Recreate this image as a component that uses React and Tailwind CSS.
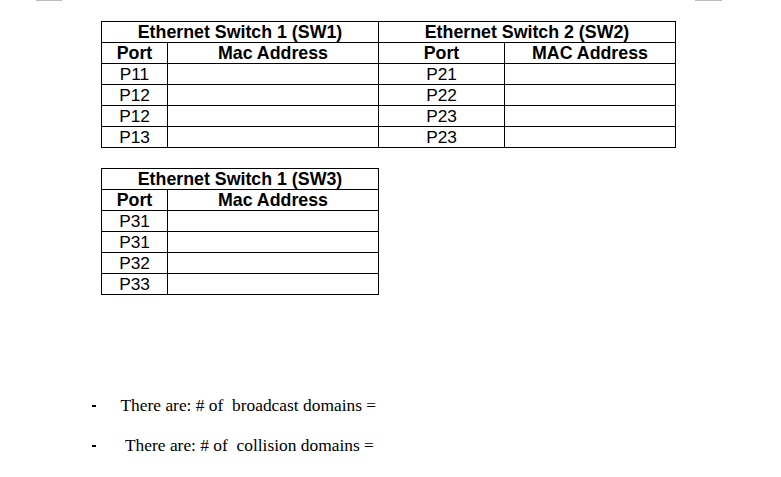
import React from "react";

const sans = { fontFamily: '"Liberation Sans", Arial, sans-serif' };

function Cell({ children, bold, span2 }) {
  return (
    <div
      className={`border-r border-b border-black h-[21px] flex items-center justify-center leading-[20px] text-black ${bold ? "font-bold text-[17.8px]" : "text-[17.3px]"} ${span2 ? "col-span-2" : ""}`}
    >
      {children}
    </div>
  );
}

export default function App() {
  const sw1 = ["P11", "P12", "P12", "P13"];
  const sw2 = ["P21", "P22", "P23", "P23"];
  const sw3 = ["P31", "P31", "P32", "P33"];
  return (
    <div className="w-[781px] h-[477px] bg-white relative overflow-hidden" style={sans}>
      <div className="flex h-px">
        <div className="ml-[36px] w-[26px] h-px bg-[#bdbdbd]" />
        <div className="ml-[633px] w-[27px] h-px bg-[#bdbdbd]" />
      </div>
      <div className="pl-[101px] pt-[20px]">
        <div className="grid grid-cols-[66px_211px_126px_171px] w-[575px] border-l border-t border-black">
          <Cell bold span2>Ethernet Switch 1 (SW1)</Cell>
          <Cell bold span2>Ethernet Switch 2 (SW2)</Cell>
          <Cell bold>Port</Cell>
          <Cell bold>Mac Address</Cell>
          <Cell bold>Port</Cell>
          <Cell bold>MAC Address</Cell>
          {sw1.map((p, i) => (
            <React.Fragment key={i}>
              <Cell>{p}</Cell>
              <Cell></Cell>
              <Cell>{sw2[i]}</Cell>
              <Cell></Cell>
            </React.Fragment>
          ))}
        </div>
        <div className="mt-[20px] grid grid-cols-[66px_211px] w-[278px] border-l border-t border-black">
          <Cell bold span2>Ethernet Switch 1 (SW3)</Cell>
          <Cell bold>Port</Cell>
          <Cell bold>Mac Address</Cell>
          {sw3.map((p, i) => (
            <React.Fragment key={i}>
              <Cell>{p}</Cell>
              <Cell></Cell>
            </React.Fragment>
          ))}
        </div>
      </div>
      <div
        className="pl-[92px] pt-[100px] flex flex-col gap-[19px] text-[17.4px] leading-[21px] text-black"
        style={{ fontFamily: '"Liberation Serif", "Times New Roman", serif' }}
      >
        <div className="flex items-center">
          <div className="w-[4px] h-[2px] bg-black" />
          <span className="ml-[24.5px] whitespace-pre">There are: # of  broadcast domains =</span>
        </div>
        <div className="flex items-center">
          <div className="w-[4px] h-[2px] bg-black" />
          <span className="ml-[29px] whitespace-pre">There are: # of  collision domains =</span>
        </div>
      </div>
    </div>
  );
}
